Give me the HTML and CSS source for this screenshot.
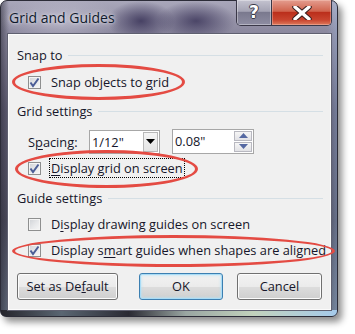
FILE: index.html
```html
<!DOCTYPE html>
<html>
<head>
<meta charset="utf-8">
<link rel="stylesheet" href="styles.css">
</head>
<body>
<div class="window">
  <div class="titlebar">
    <span class="title">Grid and Guides</span>
    <div class="caption">
      <div class="cap-help">?</div>
      <div class="cap-close">
        <svg width="20" height="14" viewBox="0 0 20 14"><path d="M3 1 L17 13 M17 1 L3 13" stroke="#3a2020" stroke-width="5.5" stroke-linecap="round"/><path d="M3 1 L17 13 M17 1 L3 13" stroke="#fff" stroke-width="3.4" stroke-linecap="round"/></svg>
      </div>
    </div>
  </div>
  <div class="client">
    <div class="group-head g1"><span>Snap to</span><i class="rule"></i></div>
    <div class="check-row r1">
      <span class="box checked"><svg width="11" height="11" viewBox="0 0 11 11"><path d="M1.5 5.5 L4 9 L9.5 1.5" fill="none" stroke="#4b5d96" stroke-width="2"/></svg></span>
      <span class="label">Snap objects to <u>g</u>rid</span>
    </div>
    <div class="group-head g2"><span>Grid settings</span><i class="rule"></i></div>
    <div class="spacing-row">
      <span class="label sp">S<u>p</u>acing:</span>
      <div class="combo">
        <span class="combo-text">1/12"</span>
        <span class="combo-btn"><svg width="9" height="5" viewBox="0 0 9 5"><path d="M0 0 H9 L4.5 5 Z" fill="#000"/></svg></span>
      </div>
      <div class="spin">
        <span class="spin-text">0.08"</span>
        <span class="spin-btns">
          <span class="sb"><svg width="9" height="5" viewBox="0 0 9 5"><path d="M0 5 H9 L4.5 0 Z" fill="#5568a2"/></svg></span>
          <span class="sb"><svg width="9" height="5" viewBox="0 0 9 5"><path d="M0 0 H9 L4.5 5 Z" fill="#5568a2"/></svg></span>
        </span>
      </div>
    </div>
    <div class="check-row r2">
      <span class="box checked"><svg width="11" height="11" viewBox="0 0 11 11"><path d="M1.5 5.5 L4 9 L9.5 1.5" fill="none" stroke="#4b5d96" stroke-width="2"/></svg></span>
      <span class="label focus"><u>D</u>isplay grid on screen</span>
    </div>
    <div class="group-head g3"><span>Guide settings</span><i class="rule"></i></div>
    <div class="check-row r3">
      <span class="box"></span>
      <span class="label">D<u>i</u>splay drawing guides on screen</span>
    </div>
    <div class="check-row r4">
      <span class="box checked"><svg width="11" height="11" viewBox="0 0 11 11"><path d="M1.5 5.5 L4 9 L9.5 1.5" fill="none" stroke="#4b5d96" stroke-width="2"/></svg></span>
      <span class="label">Display s<u>m</u>art guides when shapes are aligned</span>
    </div>
    <div class="buttons">
      <div class="btn b-default">Set as De<u>f</u>ault</div>
      <div class="btn b-ok">OK</div>
      <div class="btn b-cancel">Cancel</div>
    </div>
  </div>
  <div class="ring ring1"></div>
  <div class="ring ring2"></div>
  <div class="ring ring3"></div>
</div>
</body>
</html>
```
FILE: styles.css
```css
html, body {
  margin: 0;
  padding: 0;
  background: #ffffff;
}
body {
  width: 355px;
  height: 334px;
  overflow: hidden;
  font-family: "Open Sans", "Noto Sans", "DejaVu Sans", sans-serif;
}
.window {
  position: relative;
  width: 336px;
  height: 315px;
  border: 1px solid #2c2c38;
  border-radius: 7px 7px 6px 6px;
  box-shadow: 4px 5px 7px rgba(0,0,0,0.45);
  display: flex;
  flex-direction: column;
  background:
    linear-gradient(90deg, #25252c 0, #5a6672 18%, #2a2a33 38%, #9aa6a2 55%, #c2d2bc 75%, #a6cbeb 100%) left bottom / 100% 6px no-repeat,
    radial-gradient(ellipse 34px 20px at 140px 20px, rgba(62,56,92,0.9), rgba(62,56,92,0)),
    radial-gradient(ellipse 40px 20px at 195px 20px, rgba(62,56,92,0.85), rgba(62,56,92,0)),
    radial-gradient(ellipse 60px 26px at 60px 20px, rgba(200,198,214,0.6), rgba(200,198,214,0)),
    linear-gradient(90deg, rgba(40,40,52,0.5) 0, rgba(40,40,52,0) 8px, rgba(0,0,0,0) 326px, rgba(160,190,230,0.35) 336px),
    linear-gradient(180deg, #a9a7ba 0, #8c899f 30px, #5f5c72 110px, #4c4b5c 220px, #616b7c 315px);
}
.titlebar {
  height: 32px;
  display: flex;
  align-items: flex-start;
}
.title {
  margin: 7px 0 0 8px;
  font-size: 14px;
  line-height: 20px;
  color: #101a2c;
  text-shadow: 0 0 6px rgba(230,230,240,0.9), 0 0 3px rgba(230,230,240,0.9);
}
.caption {
  margin-left: auto;
  margin-right: 5px;
  margin-top: -1px;
  display: flex;
  height: 25px;
  border: 1px solid #3a3848;
  border-top: none;
  border-radius: 0 0 5px 5px;
  overflow: hidden;
}
.cap-help {
  width: 34px;
  height: 25px;
  background: linear-gradient(180deg, #c4c3d0 0, #a4a3b4 45%, #7a798e 50%, #8e8da2 100%);
  box-shadow: inset 0 0 0 1px rgba(255,255,255,0.35);
  border-right: 1px solid #3a3848;
  color: #ffffff;
  font-family: "DejaVu Sans", sans-serif;
  font-weight: bold;
  font-size: 17px;
  line-height: 24px;
  text-align: center;
  text-shadow: 1px 0 0 #3a3a48, -1px 0 0 #3a3a48, 0 1px 0 #3a3a48, 0 -1px 0 #3a3a48;
}
.cap-close {
  width: 59px;
  height: 25px;
  background: linear-gradient(180deg, #e49d8f 0, #d0644e 45%, #bb2f1c 50%, #c9452f 80%, #de7a5c 100%);
  box-shadow: inset 0 0 0 1px rgba(255,220,210,0.35);
  display: flex;
  align-items: center;
  justify-content: center;
}
.client {
  flex: 1;
  margin: 0 5px 5px 6px;
  background: #f0f0f0;
  border: 1px solid #5f6070;
  box-shadow: inset 0 0 0 1px #fbfbfb;
  padding: 13px 8px 0 9px;
  color: #16162a;
  font-size: 12.8px;
  display: flex;
  flex-direction: column;
}
.group-head {
  height: 16px;
  display: flex;
  align-items: center;
  line-height: 16px;
}
.group-head .rule {
  flex: 1;
  height: 1px;
  background: #d5dfe5;
  margin-left: 6px;
}
.g2 { margin-top: 11px; }
.g3 { margin-top: 12px; }
.check-row {
  height: 20px;
  display: flex;
  align-items: center;
  padding-left: 11px;
}
.r1 { margin-top: 9px; }
.r2 { margin-top: 4px; }
.r3 { margin-top: 8px; }
.r4 { margin-top: 6px; }
.box {
  width: 11px;
  height: 11px;
  border: 1px solid #8e8f8f;
  background: linear-gradient(135deg, #cfd2d6 0, #e8e9eb 55%, #f7f7f7 100%);
  box-shadow: inset 0 0 0 1px #f4f4f4;
  display: flex;
  align-items: center;
  justify-content: center;
  flex: none;
}
.label {
  margin-left: 10px;
  line-height: 18px;
  white-space: nowrap;
}
.label u { text-decoration-thickness: 1px; text-underline-offset: 2px; }
.focus {
  margin-left: 8px;
  padding: 0 1px;
  border: 1px dotted #000;
}
.spacing-row {
  margin-top: 10px;
  height: 25px;
  display: flex;
  align-items: center;
  padding-left: 11px;
}
.sp { margin-left: 0; width: 61px; }
.combo {
  width: 69px;
  height: 22px;
  border: 1px solid #a7a7a7;
  background: #fff;
  display: flex;
  align-items: center;
  justify-content: space-between;
}
.combo-text { padding-left: 2px; }
.combo-btn {
  width: 15px;
  height: 20px;
  margin-right: 1px;
  border: 1px solid #b8b8b8;
  box-sizing: border-box;
  background: linear-gradient(180deg, #f4f4f4, #e4e4e4);
  display: flex;
  align-items: center;
  justify-content: center;
}
.spin {
  margin-left: 12px;
  width: 80px;
  height: 23px;
  margin-top: -1px;
  border: 1px solid #a7a7a7;
  background: #fff;
  display: flex;
  align-items: center;
  justify-content: space-between;
}
.spin-text { padding-left: 2px; }
.spin-btns {
  display: flex;
  flex-direction: column;
  gap: 1px;
  margin-right: 1px;
}
.sb {
  width: 18px;
  height: 10px;
  box-sizing: border-box;
  border: 1px solid #b8b8c0;
  background: linear-gradient(180deg, #f6f6f6, #e2e2e6);
  display: flex;
  align-items: center;
  justify-content: center;
}
.buttons {
  margin-top: 13px;
  display: flex;
}
.btn {
  height: 25px;
  border: 1px solid #707070;
  border-radius: 3px;
  background: linear-gradient(180deg, #f2f2f2 0, #ebebeb 50%, #dddddd 51%, #cfcfcf 100%);
  box-shadow: inset 0 0 0 1px #fcfcfc;
  text-align: center;
  line-height: 24px;
}
.b-default { width: 99px; }
.b-ok {
  width: 82px;
  margin-left: 21px;
  border-color: #3c7fb1;
  box-shadow: inset 0 0 0 1px #a9dcf6, inset 0 0 2px 2px rgba(180,230,250,0.5);
}
.b-cancel { width: 83px; margin-left: 14px; }
.ring {
  position: absolute;
  border: 3px solid #e44b43;
  border-radius: 50%;
  box-sizing: border-box;
}
.ring1 { left: 11px; top: 63px; width: 173px; height: 36px; }
.ring2 { left: 14px; top: 149px; width: 183px; height: 38px; }
.ring3 { left: 11px; top: 234px; width: 323px; height: 32px; }
```
